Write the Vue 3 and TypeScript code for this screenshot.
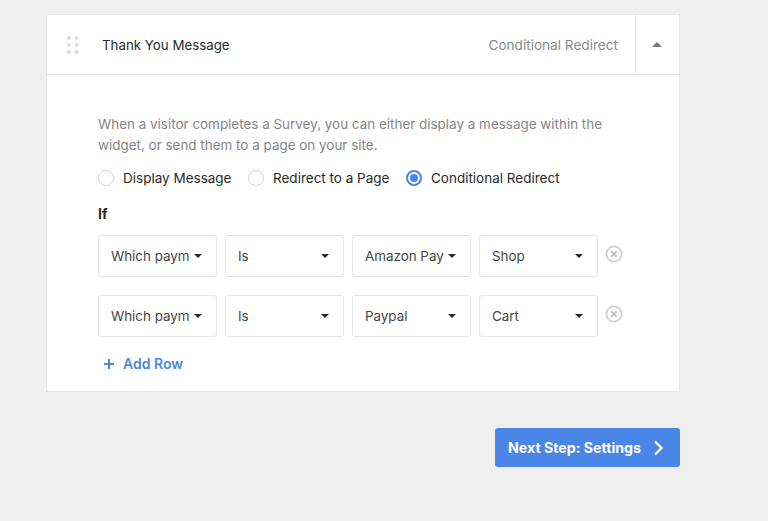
<script setup lang="ts">
interface Row { fields: string[] }
const rows: Row[] = [
  { fields: ['Which payment', 'Is', 'Amazon Pay', 'Shop'] },
  { fields: ['Which payment', 'Is', 'Paypal', 'Cart'] },
]
const options = [
  { label: 'Display Message', checked: false },
  { label: 'Redirect to a Page', checked: false },
  { label: 'Conditional Redirect', checked: true },
]
</script>

<template>
  <div class="page">
    <section class="card">
      <header class="head">
        <svg class="grip" width="12" height="18" viewBox="0 0 12 18" aria-hidden="true">
          <g fill="#dcdcdc">
            <circle cx="2" cy="2" r="2" /><circle cx="9.5" cy="2" r="2" />
            <circle cx="2" cy="9" r="2" /><circle cx="9.5" cy="9" r="2" />
            <circle cx="2" cy="16" r="2" /><circle cx="9.5" cy="16" r="2" />
          </g>
        </svg>
        <h2 class="title">Thank You Message</h2>
        <span class="status">Conditional Redirect</span>
        <button class="toggle" type="button" aria-label="Collapse"><span class="caret-up"></span></button>
      </header>
      <div class="body">
        <p class="intro">When a visitor completes a Survey, you can either display a message within the widget, or send them to a page on your site.</p>
        <div class="radios">
          <label v-for="o in options" :key="o.label" class="radio">
            <span class="dot" :class="{ on: o.checked }"></span>{{ o.label }}
          </label>
        </div>
        <div class="if">If</div>
        <div class="rows">
          <div v-for="(r, i) in rows" :key="i" class="row">
            <div v-for="(f, j) in r.fields" :key="j" class="select">
              <span class="value">{{ f }}</span><span class="caret"></span>
            </div>
            <svg class="remove" width="18" height="18" viewBox="0 0 18 18" aria-label="Remove row">
              <circle cx="9" cy="9" r="7.6" fill="none" stroke="#cfcfcf" stroke-width="1.8" />
              <path d="M6.3 6.3l5.4 5.4M11.7 6.3l-5.4 5.4" fill="none" stroke="#c4c4c4" stroke-width="2" />
            </svg>
          </div>
        </div>
        <a class="add">
          <svg width="12" height="12" viewBox="0 0 12 12" aria-hidden="true"><path d="M6 1v10M1 6h10" stroke="#4a86e8" stroke-width="2" fill="none" /></svg>
          Add Row
        </a>
      </div>
    </section>
    <div class="foot">
      <button class="next" type="button">
        Next Step: Settings
        <svg width="11" height="16" viewBox="0 0 11 16" aria-hidden="true"><path d="M2 1.5L8.5 8L2 14.5" stroke="#fff" stroke-width="2.2" fill="none" /></svg>
      </button>
    </div>
  </div>
</template>

<style>
html, body { background: #efefef; }
</style>

<style scoped>
.page {
  box-sizing: border-box;
  width: 768px;
  height: 521px;
  padding: 14px 88px 0 46px;
  font-family: Inter, "Liberation Sans", sans-serif;
  background: #efefef;
  overflow: hidden;
}
.card {
  background: #fff;
  border: 1px solid #e6e6e6;
  border-top-color: #e9e9e9;
  height: 378px;
  box-sizing: border-box;
}
.head {
  display: flex;
  align-items: center;
  height: 60px;
  border-bottom: 1px solid #e6e6e6;
  box-sizing: border-box;
}
.grip { margin-left: 20px; width: 12px; flex: none; }
.title { margin: 0 0 0 23px; font-size: 13.3px; font-weight: 400; color: #2a2a2a; flex: 1; }
.status { font-size: 13.6px; color: #8a8a8a; margin-right: 17px; }
.toggle {
  width: 44px;
  height: 100%;
  padding: 0;
  background: none;
  border: 0;
  border-left: 1px solid #e9e9e9;
  display: flex;
  align-items: center;
  justify-content: center;
}
.caret-up {
  width: 0; height: 0;
  border-left: 5px solid transparent;
  border-right: 5px solid transparent;
  border-bottom: 5px solid #777;
  margin-left: -2px;
}
.body { padding: 39px 0 0 51px; }
.intro { margin: 0; width: 510px; font-size: 13.45px; line-height: 21px; color: #858585; }
.radios { display: flex; gap: 16.5px; margin-top: 12px; height: 20px; align-items: center; }
.radio { display: flex; align-items: center; gap: 9px; font-size: 13.5px; color: #2a2a2a; }
.dot {
  width: 16px; height: 16px;
  border-radius: 50%;
  border: 1.5px solid #d4d4d4;
  background: #fff;
  box-sizing: border-box;
}
.dot.on { border: 2px solid #4a86e8; position: relative; }
.dot.on::after {
  content: "";
  position: absolute;
  inset: 2px;
  border-radius: 50%;
  background: #4a86e8;
}
.if { margin-top: 16px; font-size: 14px; font-weight: 700; color: #2a2a2a; line-height: 20px; }
.rows { display: flex; flex-direction: column; gap: 18px; margin-top: 11px; }
.row { display: flex; align-items: center; gap: 8.3px; }
.select {
  box-sizing: border-box;
  width: 118.7px;
  height: 42px;
  padding: 0 14px 0 12px;
  display: flex;
  align-items: center;
  border: 1px solid #e6e6e6;
  border-radius: 3px;
  background: #fff;
  font-size: 13.4px;
  color: #444;
}
.value { flex: 1; overflow: hidden; white-space: nowrap; }
.caret {
  flex: none;
  margin-left: 4px;
  width: 0; height: 0;
  border-left: 4px solid transparent;
  border-right: 4px solid transparent;
  border-top: 4px solid #2a2a2a;
}
.remove { margin-top: -4px; margin-left: -1px; }
.add {
  display: flex;
  align-items: center;
  gap: 8px;
  margin: 18px 0 0 5px;
  font-size: 14px;
  font-weight: 600;
  color: #4a86e8;
}
.foot { display: flex; justify-content: flex-end; margin-top: 36px; }
.next {
  width: 185px;
  height: 39px;
  padding: 0 0 0 13px;
  display: flex;
  align-items: center;
  gap: 11.5px;
  background: #4a86e8;
  border: 0;
  border-radius: 3px;
  font: 700 14.2px Inter, "Liberation Sans", sans-serif;
  color: #fff;
}
</style>
